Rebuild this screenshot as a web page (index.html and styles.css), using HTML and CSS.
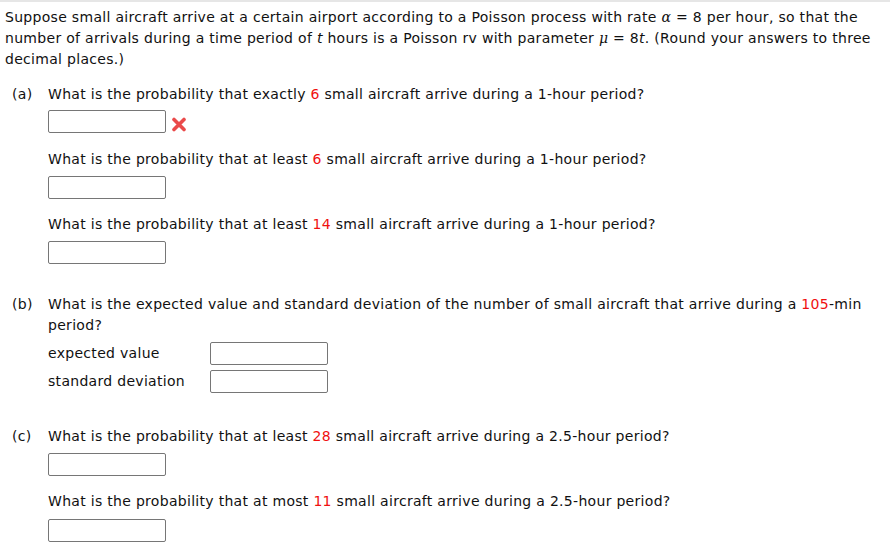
FILE: index.html
```html
<!DOCTYPE html>
<html>
<head>
<meta charset="utf-8">
<link rel="stylesheet" href="styles.css">
</head>
<body>
<div class="page">
  <p class="intro">Suppose small aircraft arrive at a certain airport according to a Poisson process with rate <i class="m">α</i> = 8 per hour, so that the number of arrivals during a time period of <i>t</i> hours is a Poisson rv with parameter <i class="m">μ</i> = 8<i>t</i>. (Round your answers to three decimal places.)</p>

  <div class="part part-a">
    <span class="label">(a)</span>
    <div class="body">
      <p class="q">What is the probability that exactly <span class="red">6</span> small aircraft arrive during a 1-hour period?</p>
      <div class="answer first">
        <span class="box"></span>
        <svg class="wrong" width="16" height="15" viewBox="0 0 16 15"><path d="M3 2.5 L13 12.5 M13 2.5 L3 12.5" stroke="#ea4a4a" stroke-width="3.6" stroke-linecap="round"/></svg>
      </div>
      <p class="q">What is the probability that at least <span class="red">6</span> small aircraft arrive during a 1-hour period?</p>
      <div class="answer"><span class="box"></span></div>
      <p class="q">What is the probability that at least <span class="red">14</span> small aircraft arrive during a 1-hour period?</p>
      <div class="answer"><span class="box"></span></div>
    </div>
  </div>

  <div class="part part-b">
    <span class="label">(b)</span>
    <div class="body">
      <p class="q">What is the expected value and standard deviation of the number of small aircraft that arrive during a <span class="red">105</span>-min period?</p>
      <div class="fields">
        <span class="fname">expected value</span><span class="box"></span>
        <span class="fname">standard deviation</span><span class="box"></span>
      </div>
    </div>
  </div>

  <div class="part part-c">
    <span class="label">(c)</span>
    <div class="body">
      <p class="q">What is the probability that at least <span class="red">28</span> small aircraft arrive during a 2.5-hour period?</p>
      <div class="answer first"><span class="box"></span></div>
      <p class="q">What is the probability that at most <span class="red">11</span> small aircraft arrive during a 2.5-hour period?</p>
      <div class="answer"><span class="box"></span></div>
    </div>
  </div>
</div>
</body>
</html>
```

FILE: styles.css
```css
html, body {
  margin: 0;
  padding: 0;
  background: #fff;
}
.page {
  border-top: 2px solid #e6e6e6;
  font-family: "DejaVu Sans", Verdana, sans-serif;
  font-size: 14px;
  letter-spacing: 0.3px;
  line-height: 21px;
  color: #111;
}
p { margin: 0; }
.intro {
  margin: 5px 0 0 0;
  padding: 0 14px 0 5px;
}
.m { font-family: "DejaVu Serif", serif; }
.red { color: #f01010; }
.part {
  display: flex;
  padding-left: 12px;
}
.label {
  width: 36px;
  flex: none;
}
.body {
  flex: 1;
  padding-right: 20px;
}
.part-a { margin-top: 14px; }
.part-b { margin-top: 30px; }
.part-c { margin-top: 33px; }
.q + .answer { margin-top: 6px; }
.part-a .q + .answer.first { margin-top: 5px; }
.answer + .q { margin-top: 15px; }
.part-a .answer.first + .q { margin-top: 16px; }
.part-c .q + .answer { margin-top: 7px; }
.part-c .q + .answer.first { margin-top: 6px; }
.answer {
  display: flex;
  align-items: flex-start;
  height: 23px;
}
.box {
  display: block;
  width: 118px;
  height: 23px;
  box-sizing: border-box;
  border: 1px solid #767676;
  border-radius: 2px;
  background: #fff;
}
.wrong {
  margin: 7px 0 0 5px;
}
.fields {
  display: grid;
  grid-template-columns: 162px 118px;
  row-gap: 5px;
  margin-top: 6px;
  align-items: center;
}
.fname { line-height: 23px; }
```
